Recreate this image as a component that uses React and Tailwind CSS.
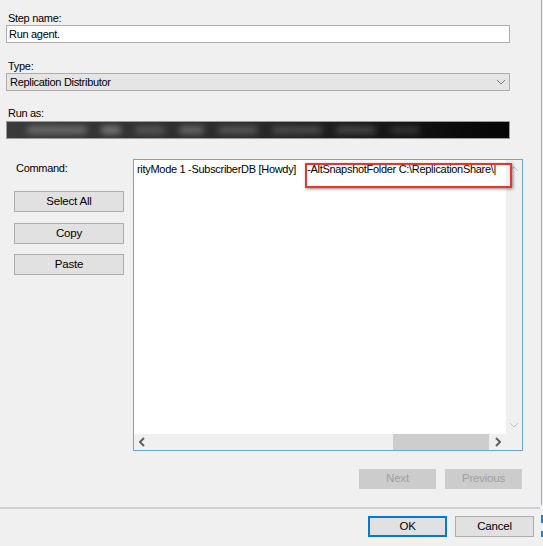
import React from 'react';

const Chevron = ({ dir = 'down', className = '' }) => {
  const paths = {
    down: 'M1 1 L5 5 L9 1',
    up: 'M1 5 L5 1 L9 5',
    left: 'M5 1 L1 5 L5 9',
    right: 'M1 1 L5 5 L1 9',
  };
  const isVert = dir === 'down' || dir === 'up';
  return (
    <svg
      width={isVert ? 10 : 6}
      height={isVert ? 6 : 10}
      viewBox={isVert ? '0 0 10 6' : '0 0 6 10'}
      className={className}
      fill="none"
      stroke="currentColor"
    >
      <path d={paths[dir]} />
    </svg>
  );
};

const WinButton = ({ children, className = '', disabled = false, primary = false }) => (
  <div
    className={`flex items-center justify-center text-[11.5px] tracking-[-0.2px] leading-none ${
      disabled
        ? 'bg-[#cccccc] border border-[#cccccc] text-[#a0a0a0]'
        : primary
        ? 'bg-[#e1e1e1] border-2 border-[#0078d7] text-black'
        : 'bg-[#e1e1e1] border border-[#adadad] text-black'
    } ${className}`}
  >
    {children}
  </div>
);

export default function App() {
  return (
    <div
      className="w-[543px] h-[546px] bg-[#f0f0f0] flex overflow-hidden text-black text-[11px] tracking-[-0.3px]"
      style={{ fontFamily: '"Liberation Sans", Arial, sans-serif' }}
    >
      <div className="w-[540px] flex flex-col">
        {/* top fields */}
        <div className="pl-[6px] pr-[30px] pt-[11px] flex flex-col">
          <div className="pl-[2px] leading-[14px] h-[14px]">Step name:</div>
          <div className="h-[18px] bg-white border border-[#adadad] flex items-center pl-[2px]">
            Run agent.
          </div>
          <div className="pl-[2px] leading-[14px] h-[14px] mt-[16px]">Type:</div>
          <div className="h-[18px] bg-[#e5e5e5] border border-[#adadad] flex items-center justify-between pl-[3px] pr-[3px]">
            <span>Replication Distributor</span>
            <Chevron dir="down" className="text-[#7a7a7a]" />
          </div>
          <div className="pl-[2px] leading-[14px] h-[14px] mt-[15px]">Run as:</div>
          <div className="h-[18px] mt-[1px] border border-[#9a9a9a] relative overflow-hidden bg-gradient-to-r from-[#3a3a3a] via-[#2a2a2a] to-[#050505]">
            <div className="absolute inset-0 flex items-center gap-[14px] px-[20px] blur-[3px]">
              <div className="w-[60px] h-[8px] bg-[#6a6a6a] rounded-full" />
              <div className="w-[20px] h-[8px] bg-[#777] rounded-full" />
              <div className="w-[30px] h-[8px] bg-[#555] rounded-full" />
              <div className="w-[25px] h-[8px] bg-[#666] rounded-full" />
              <div className="w-[40px] h-[8px] bg-[#555] rounded-full" />
              <div className="w-[50px] h-[8px] bg-[#4a4a4a] rounded-full" />
              <div className="w-[40px] h-[8px] bg-[#444] rounded-full" />
              <div className="w-[30px] h-[8px] bg-[#333] rounded-full" />
            </div>
          </div>
        </div>

        {/* command area */}
        <div className="flex mt-[20px] h-[292px]">
          <div className="w-[133px] pl-[14px] flex flex-col">
            <div className="pl-[2px] leading-[14px] mt-[2px]">Command:</div>
            <WinButton className="w-[110px] h-[21px] mt-[16px]">Select All</WinButton>
            <WinButton className="w-[110px] h-[21px] mt-[11px]">Copy</WinButton>
            <WinButton className="w-[110px] h-[21px] mt-[10px]">Paste</WinButton>
          </div>
          <div className="w-[390px] h-[292px] border border-[#5ea8e6] bg-white flex flex-col relative">
            <div className="flex flex-1 min-h-0">
              <div className="flex-1 pl-[3px] pt-[2px] leading-[15px] whitespace-nowrap overflow-hidden">
                rityMode 1 -SubscriberDB [Howdy]&nbsp;&nbsp;&nbsp;&nbsp;-AltSnapshotFolder C:\ReplicationShare\|
              </div>
              <div className="w-[16px] bg-[#f0f0f0] flex flex-col items-center justify-between py-[6px] text-[#c0c0c0]">
                <Chevron dir="up" />
                <Chevron dir="down" />
              </div>
            </div>
            <div className="h-[16px] flex bg-[#f0f0f0]">
              <div className="flex-1 flex items-center text-[#606060]">
                <div className="w-[16px] flex justify-center">
                  <Chevron dir="left" className="stroke-2" />
                </div>
                <div className="flex-1 h-full flex justify-end">
                  <div className="w-[96px] h-full bg-[#cdcdcd]" />
                </div>
                <div className="w-[17px] flex justify-center">
                  <Chevron dir="right" className="stroke-2" />
                </div>
              </div>
              <div className="w-[16px]" />
            </div>
            {/* highlight */}
            <div className="absolute left-[171px] top-[3px] w-[207px] h-[25px] border-2 border-[#e8332f] shadow-[1px_1px_3px_rgba(0,0,0,0.45)]" />
          </div>
        </div>

        {/* next / previous */}
        <div className="flex justify-end gap-[9px] pr-[18px] mt-[18px]">
          <WinButton disabled className="w-[77px] h-[20px]">Next</WinButton>
          <WinButton disabled className="w-[77px] h-[20px]">Previous</WinButton>
        </div>

        <div className="h-[2px] bg-[#cfcfd3] mt-[18px]" />

        <div className="flex justify-end gap-[8px] pr-[6px] mt-[7px]">
          <WinButton primary className="w-[79px] h-[21px]">OK</WinButton>
          <WinButton className="w-[79px] h-[21px]">Cancel</WinButton>
        </div>
      </div>
      <div className="w-[3px] flex flex-col">
        <div className="w-[1px] h-[505px] bg-[#a8a8a8] ml-[1px]" />
        <div className="w-[2px] h-[8px] bg-[#2a7ad0] mt-[10px] ml-[1px]" />
        <div className="w-[2px] h-[6px] bg-[#2a7ad0] mt-[8px] ml-[1px]" />
      </div>
    </div>
  );
}
